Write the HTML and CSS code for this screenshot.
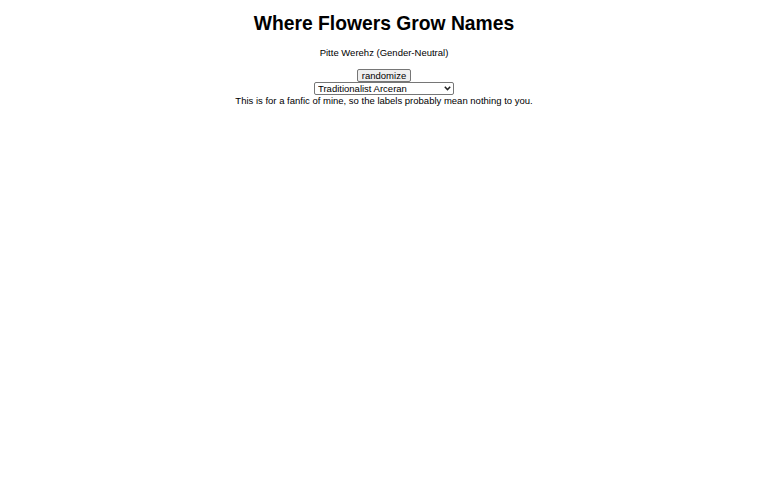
FILE: index.html
```html
<!DOCTYPE html>
<html lang="en">
<head>
  <meta charset="UTF-8" />
  <title>Where Flowers Grow Names</title>
  <link rel="stylesheet" href="styles.css">
</head>
<body>
  <div class="page">
    <h1>Where Flowers Grow Names</h1>
    <p id="name">Pitte Werehz (Gender-Neutral)</p>
    <button class="btn" onclick="randomize()">randomize</button><br>
    <span class="picker">
      <select id="culture">
        <option>Traditionalist Arceran</option>
        <option>Modern Arceran</option>
      </select>
      <svg class="arrow" width="7" height="5" viewBox="0 0 7 5">
        <path d="M0.8 0.8 L3.5 3.6 L6.2 0.8" fill="none" stroke="#222" stroke-width="1.5"/>
      </svg>
    </span>
    <div class="note">This is for a fanfic of mine, so the labels probably mean nothing to you.</div>
  </div>
  <script>
    function randomize() {
      // placeholder, names come from the generator lists
    }
  </script>
</body>
</html>
```

FILE: styles.css
```css
body {
  margin: 0;
  font-family: "Liberation Sans", Arial, sans-serif;
  background: #fff;
  color: #000;
}

.page {
  text-align: center;
  font-size: 9.5px;
  line-height: 11px;
  padding-top: 6px;
}

h1 {
  font-size: 19.3px;
  line-height: 22px;
  margin: 7px 0 12px;
}

#name {
  margin: 0 0 11px;
}

.btn {
  font-family: "Liberation Sans", Arial, sans-serif;
  font-size: 9.5px;
  line-height: 10px;
  height: 13px;
  padding: 0 4px;
  margin: 0;
  border: 1px solid #767676;
  border-radius: 2px;
  background: #efefef;
  color: #000;
  vertical-align: top;
}

.picker {
  position: relative;
  display: inline-block;
  vertical-align: top;
  height: 13px;
}

select {
  appearance: none;
  -webkit-appearance: none;
  display: block;
  font-family: "Liberation Sans", Arial, sans-serif;
  font-size: 9.5px;
  width: 140px;
  height: 13px;
  padding: 0 0 0 3px;
  margin: 0;
  border: 1px solid #767676;
  border-radius: 2px;
  background: #fff;
  color: #000;
}

.arrow {
  position: absolute;
  right: 3px;
  top: 4px;
  pointer-events: none;
}

.note {
  margin-top: 0;
}
```
